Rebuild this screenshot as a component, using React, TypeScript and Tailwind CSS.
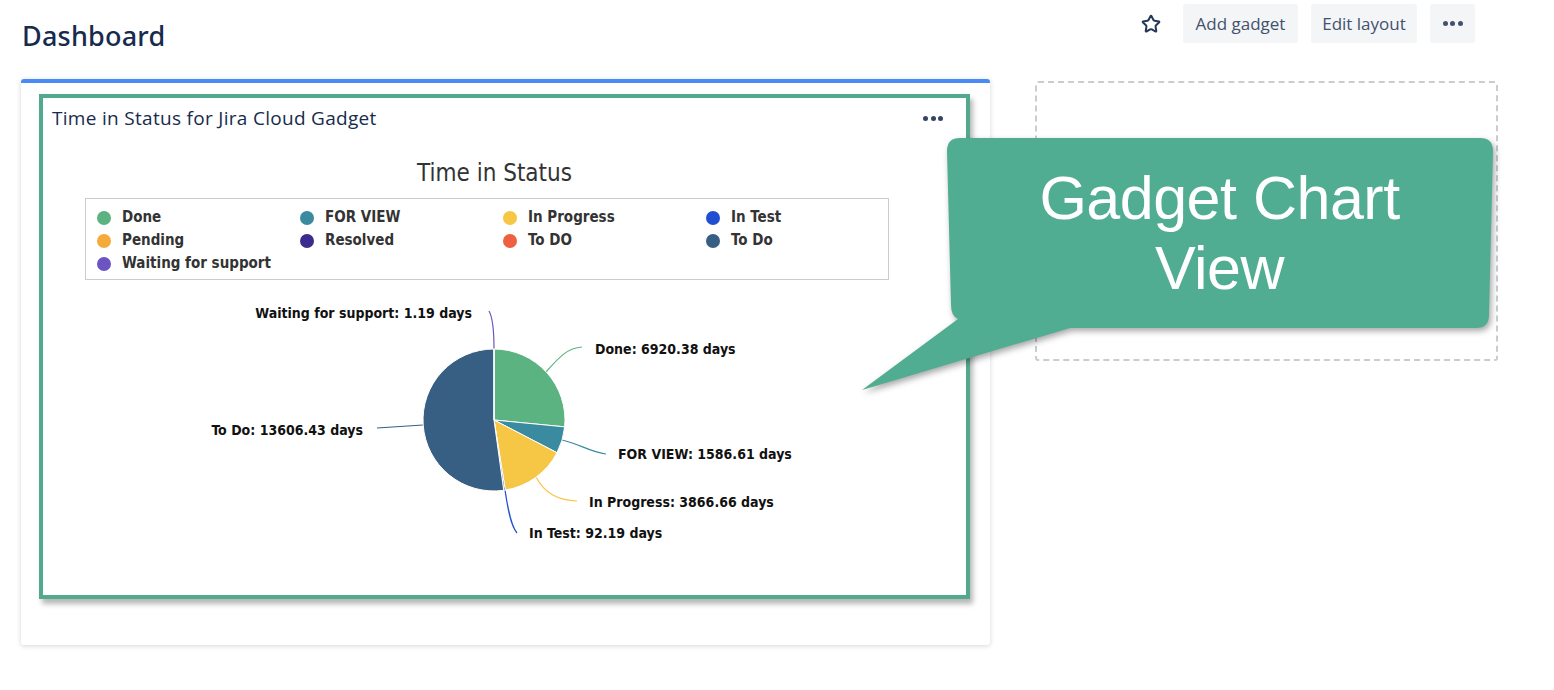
import { Star } from "lucide-react";

const legend = [
  { name: "Done", color: "#5bb381" },
  { name: "FOR VIEW", color: "#3a8ba0" },
  { name: "In Progress", color: "#f6c744" },
  { name: "In Test", color: "#1f4fd0" },
  { name: "Pending", color: "#f4ab3c" },
  { name: "Resolved", color: "#3c2a8c" },
  { name: "To DO", color: "#ee6040" },
  { name: "To Do", color: "#375f84" },
  { name: "Waiting for support", color: "#6a55c2" },
];

const slices = [
  { value: 6920.38, color: "#5bb381" },
  { value: 1586.61, color: "#3a8ba0" },
  { value: 3866.66, color: "#f6c744" },
  { value: 92.19, color: "#1f4fd0" },
  { value: 13606.43, color: "#375f84" },
  { value: 1.19, color: "#6a55c2" },
];

const labels = [
  { text: "Waiting for support: 1.19 days", x: 472, y: 313, anchor: "end", color: "#6a55c2", d: "M494 349 C494 330 493 318 489 311" },
  { text: "Done: 6920.38 days", x: 595, y: 349, anchor: "start", color: "#5bb381", d: "M546 372 C560 356 568 348 582 347" },
  { text: "FOR VIEW: 1586.61 days", x: 618, y: 454, anchor: "start", color: "#3a8ba0", d: "M562 440 C580 444 590 452 606 454" },
  { text: "In Progress: 3866.66 days", x: 589, y: 502, anchor: "start", color: "#f6c744", d: "M536 477 C545 494 558 500 577 501" },
  { text: "In Test: 92.19 days", x: 529, y: 533, anchor: "start", color: "#1f4fd0", d: "M505 490 C508 510 511 526 517 533" },
  { text: "To Do: 13606.43 days", x: 363, y: 430, anchor: "end", color: "#375f84", d: "M423 425 L377 428" },
];

const chartFont = "'DejaVu Sans Condensed', 'DejaVu Sans', sans-serif";

function Pie() {
  const cx = 494;
  const cy = 420;
  const r = 71;
  const total = slices.reduce((s, x) => s + x.value, 0);
  let angle = -Math.PI / 2;
  const paths = slices.map((s) => {
    const a0 = angle;
    const a1 = angle + (s.value / total) * Math.PI * 2;
    angle = a1;
    const large = a1 - a0 > Math.PI ? 1 : 0;
    const x0 = cx + r * Math.cos(a0);
    const y0 = cy + r * Math.sin(a0);
    const x1 = cx + r * Math.cos(a1);
    const y1 = cy + r * Math.sin(a1);
    return { d: `M${cx} ${cy} L${x0} ${y0} A${r} ${r} 0 ${large} 1 ${x1} ${y1} Z`, color: s.color };
  });

  return (
    <svg width="923" height="305" viewBox="43 290 923 305" className="block">
      {labels.map((l, i) => (
        <path key={i} d={l.d} fill="none" stroke={l.color} strokeWidth="1.2" />
      ))}
      {paths.map((p, i) => (
        <path key={i} d={p.d} fill={p.color} stroke="#ffffff" strokeWidth="1" strokeLinejoin="round" />
      ))}
      {labels.map((l, i) => (
        <text
          key={i}
          x={l.x}
          y={l.y + 5}
          textAnchor={l.anchor as "start" | "end"}
          fontFamily={chartFont}
          fontWeight="bold"
          fontSize="14"
          fill="#111111"
        >
          {l.text}
        </text>
      ))}
    </svg>
  );
}

function Dots({ color = "#42526e" }: { color?: string }) {
  return (
    <div className="flex items-center gap-[2.5px]">
      <span className="w-[5px] h-[5px] rounded-full" style={{ background: color }}></span>
      <span className="w-[5px] h-[5px] rounded-full" style={{ background: color }}></span>
      <span className="w-[5px] h-[5px] rounded-full" style={{ background: color }}></span>
    </div>
  );
}

export default function App() {
  return (
    <div className="relative w-[1554px] h-[690px] bg-white overflow-hidden font-['Open_Sans',sans-serif]">
      <div className="flex justify-between pl-[22px] pr-[79px] pt-[4px]">
        <h1 className="mt-[16px] text-[27px] leading-[32px] font-medium text-[#172b4d] font-['Noto_Sans',sans-serif] tracking-[0.2px]">
          Dashboard
        </h1>
        <div className="flex items-center h-[39px] gap-[13px]">
          <button className="w-[32px] h-[39px] flex items-center justify-center mr-[3px]">
            <Star size={20} strokeWidth={2.4} color="#253858" />
          </button>
          <button className="w-[115px] h-[39px] rounded-[3px] bg-[#f4f5f7] text-[#42526e] text-[17px]">Add gadget</button>
          <button className="w-[106px] h-[39px] rounded-[3px] bg-[#f4f5f7] text-[#42526e] text-[17px]">Edit layout</button>
          <button className="w-[45px] h-[39px] rounded-[3px] bg-[#f4f5f7] flex items-center justify-center">
            <Dots />
          </button>
        </div>
      </div>

      <div className="flex items-start pl-[21px] mt-[27px] gap-[45px]">
        <div className="w-[969px] bg-white border-t-4 border-[#4a8af4] rounded-[3px] shadow-[0_1px_5px_rgba(9,30,66,0.18)] pt-[11px] pb-[46px] pl-[18px]">
          <div className="w-[931px] border-4 border-[#52a98e] bg-white shadow-[3px_5px_5px_rgba(0,0,0,0.28)]">
            <div className="flex items-center justify-between pt-[8px] pl-[9px] pr-[23px] h-[32px]">
              <span className="text-[19px] leading-[24px] tracking-[0.3px] text-[#172b4d]">Time in Status for Jira Cloud Gadget</span>
              <Dots color="#344563" />
            </div>
            <div
              className="mt-[28px] pr-[20px] h-[30px] leading-[30px] text-center text-[24px] font-light text-[#333333]"
              style={{ fontFamily: chartFont }}
            >
              Time in Status
            </div>
            <div className="mt-[10px] ml-[42px] w-[804px] h-[82px] border border-[#cccccc] pl-[11px] pt-[7px]">
              <div className="grid grid-cols-[203px_203px_203px_183px]">
                {legend.map((l) => (
                  <div key={l.name} className="flex items-center h-[23px] gap-[11px]">
                    <span className="w-[14px] h-[14px] rounded-full shrink-0" style={{ background: l.color }}></span>
                    <span
                      className="text-[15px] font-bold text-[#333333] whitespace-nowrap"
                      style={{ fontFamily: chartFont }}
                    >
                      {l.name}
                    </span>
                  </div>
                ))}
              </div>
            </div>
            <div className="mt-[10px]">
              <Pie />
            </div>
          </div>
        </div>
        <div className="mt-[2px] w-[463px] h-[280px] border-2 border-dashed border-[#c9ccd1] rounded-[3px]"></div>
      </div>

      <svg
        className="absolute left-[850px] top-[128px] drop-shadow-[2px_3px_3px_rgba(0,0,0,0.35)]"
        width="660"
        height="275"
        viewBox="850 128 660 275"
      >
        <path
          d="M960 138 L1480 138 Q1493 138 1493 151 L1489 315 Q1489 328 1476 328 L1070 328 L862 390 L958 319 Q951 316 951 305 L947 151 Q947 138 960 138 Z"
          fill="#50ad91"
        />
      </svg>
      <div className="absolute left-[947px] top-[138px] w-[545px] h-[190px] flex flex-col items-center justify-center text-white text-[61px] leading-[70px] font-['Liberation_Sans',sans-serif] tracking-[-0.5px]">
        <span>Gadget Chart</span>
        <span>View</span>
      </div>
    </div>
  );
}
